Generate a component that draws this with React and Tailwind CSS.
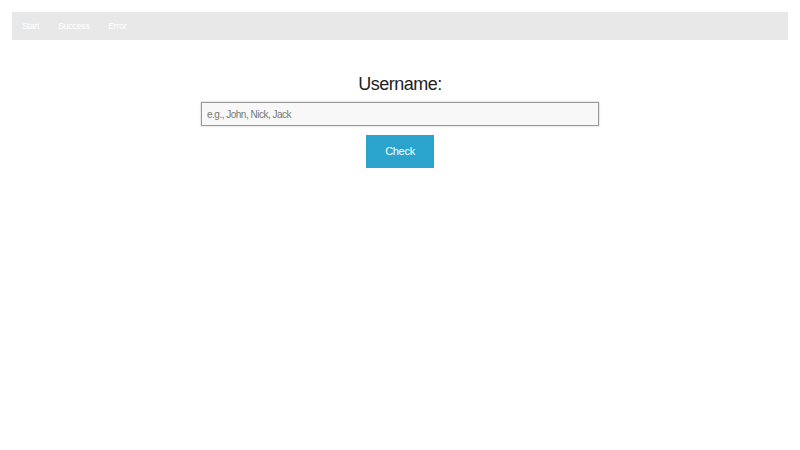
export default function App() {
  return (
    <div className="min-h-[450px] bg-white p-3 font-['Liberation_Sans',Arial,sans-serif]">
      {/* Nav */}
      <nav className="flex h-7 items-center gap-[19px] bg-[#e8e8e8] px-[10px] pt-[1px] text-[9px] tracking-[-0.4px] text-white">
        <a href="#">Start</a>
        <a href="#">Success</a>
        <a href="#">Error</a>
      </nav>

      {/* Form */}
      <div className="mt-[32px] flex flex-col items-center">
        <h2 className="text-[18px] leading-[24px] tracking-[-0.5px] text-[#222]">Username:</h2>
        <input
          type="text"
          placeholder="e.g., John, Nick, Jack"
          className="mt-[6px] h-6 w-[398px] border border-[#999] bg-[#f8f8f8] px-[5px] font-['Liberation_Sans',Arial,sans-serif] text-[10px] tracking-[-0.5px] text-[#333] shadow-[0_0_2px_rgba(0,0,0,0.25)] outline-none placeholder:text-[#777]"
        />
        <button className="mt-[9px] h-[33px] w-[68px] bg-[#2aa4cc] font-['Liberation_Sans',Arial,sans-serif] text-[11px] tracking-[-0.3px] text-white">
          Check
        </button>
      </div>
    </div>
  )
}
